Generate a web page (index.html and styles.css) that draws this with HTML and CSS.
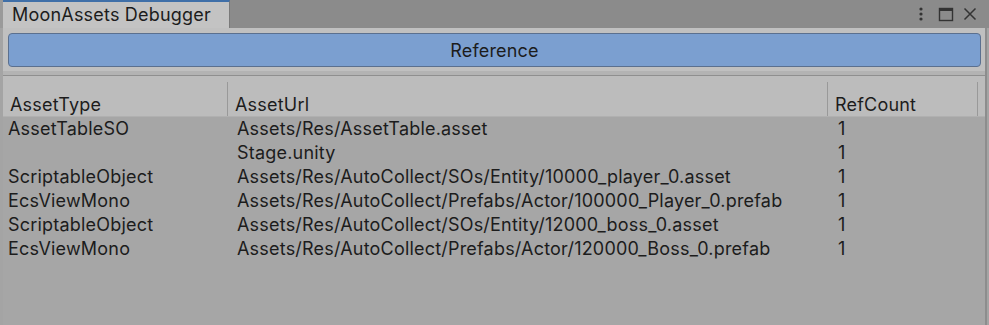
FILE: index.html
```html
<!DOCTYPE html>
<html lang="en">
<head>
  <meta charset="UTF-8" />
  <title>MoonAssets Debugger</title>
  <link rel="stylesheet" href="styles.css">
</head>
<body>
  <div class="window">
    <div class="tabbar">
      <div class="edge"></div>
      <div class="tab">MoonAssets Debugger</div>
      <div class="tools">
        <svg class="kebab" width="6" height="16" viewBox="0 0 6 16"><circle cx="3" cy="3" r="1.6" fill="#333"/><circle cx="3" cy="8" r="1.6" fill="#333"/><circle cx="3" cy="13" r="1.6" fill="#333"/></svg>
        <svg width="16" height="16" viewBox="0 0 16 16"><rect x="1.5" y="2.5" width="13" height="12" fill="none" stroke="#333" stroke-width="1.4"/><rect x="1.5" y="2" width="13" height="3" fill="#333"/></svg>
        <svg width="16" height="16" viewBox="0 0 16 16"><path d="M2.5 2.5 L13.5 13.5 M13.5 2.5 L2.5 13.5" stroke="#333" stroke-width="1.5" fill="none"/></svg>
      </div>
    </div>

    <div class="panel">
      <div class="toolbar">
        <button class="btn">Reference</button>
      </div>

      <div class="table">
        <div class="head">
          <div class="th">AssetType</div>
          <div class="th">AssetUrl</div>
          <div class="th">RefCount</div>
        </div>
        <div class="body" id="rows"></div>
      </div>
    </div>
  </div>

  <script>
    const data = [
      ["AssetTableSO", "Assets/Res/AssetTable.asset", 1],
      ["", "Stage.unity", 1],
      ["ScriptableObject", "Assets/Res/AutoCollect/SOs/Entity/10000_player_0.asset", 1],
      ["EcsViewMono", "Assets/Res/AutoCollect/Prefabs/Actor/100000_Player_0.prefab", 1],
      ["ScriptableObject", "Assets/Res/AutoCollect/SOs/Entity/12000_boss_0.asset", 1],
      ["EcsViewMono", "Assets/Res/AutoCollect/Prefabs/Actor/120000_Boss_0.prefab", 1]
    ];
    const rows = document.getElementById("rows");
    data.forEach(row => {
      const div = document.createElement("div");
      div.className = "row";
      div.innerHTML = `
        <div class="td">${row[0]}</div>
        <div class="td">${row[1]}</div>
        <div class="td">${row[2]}</div>
      `;
      rows.appendChild(div);
    });
  </script>
</body>
</html>
```

FILE: styles.css
```css
body {
  margin: 0;
  font-family: Inter, "Noto Sans", sans-serif;
  font-size: 18px;
  letter-spacing: 0.2px;
  color: #1c1c1c;
  background: #a4a4a4;
}
.window {
  width: 989px;
  height: 325px;
  display: flex;
  flex-direction: column;
}
.tabbar {
  height: 28px;
  background: #8b8b8b;
  display: flex;
  align-items: stretch;
  flex-shrink: 0;
}
.edge {
  width: 3px;
  background: #9a9a9a;
}
.tab {
  width: 217px;
  padding-left: 9px;
  background: #c3c3c3;
  border-top: 2px solid #3f6fa8;
  border-right: 1px solid #7a7a7a;
  line-height: 26px;
}
.tools {
  margin-left: auto;
  display: flex;
  align-items: center;
  gap: 8px;
  padding-right: 11px;
}
.kebab {
  margin-right: 6px;
}
.panel {
  flex: 1;
  display: flex;
  flex-direction: column;
  margin-left: 3px;
  border-right: 2px solid #8d8d8d;
  margin-right: 2px;
}
.toolbar {
  background: #c0c0c0;
  padding: 5px 4px 4px 5px;
  border-bottom: 4px solid #b3b3b3;
}
.btn {
  display: block;
  width: 100%;
  height: 34px;
  background: #7b9fd0;
  border: 1px solid #5b708f;
  border-radius: 4px;
  font-family: inherit;
  font-size: 18px;
  letter-spacing: 0.2px;
  color: #1c1c1c;
}
.table {
  flex: 1;
  display: flex;
  flex-direction: column;
  border-top: 1px solid #8f8f8f;
}
.head {
  display: grid;
  grid-template-columns: 225px 600px 150px;
  background: #bcbcbc;
  height: 40px;
  border-bottom: 1px solid #b0b0b0;
}
.th {
  padding: 12px 0 0 7px;
  border-right: 1px solid #999;
  margin-top: 6px;
}
.body {
  flex: 1;
  background: #a6a6a6;
}
.row {
  display: grid;
  grid-template-columns: 229px 601px 150px;
  height: 24px;
  line-height: 24px;
}
.td {
  padding-left: 5px;
}
```
